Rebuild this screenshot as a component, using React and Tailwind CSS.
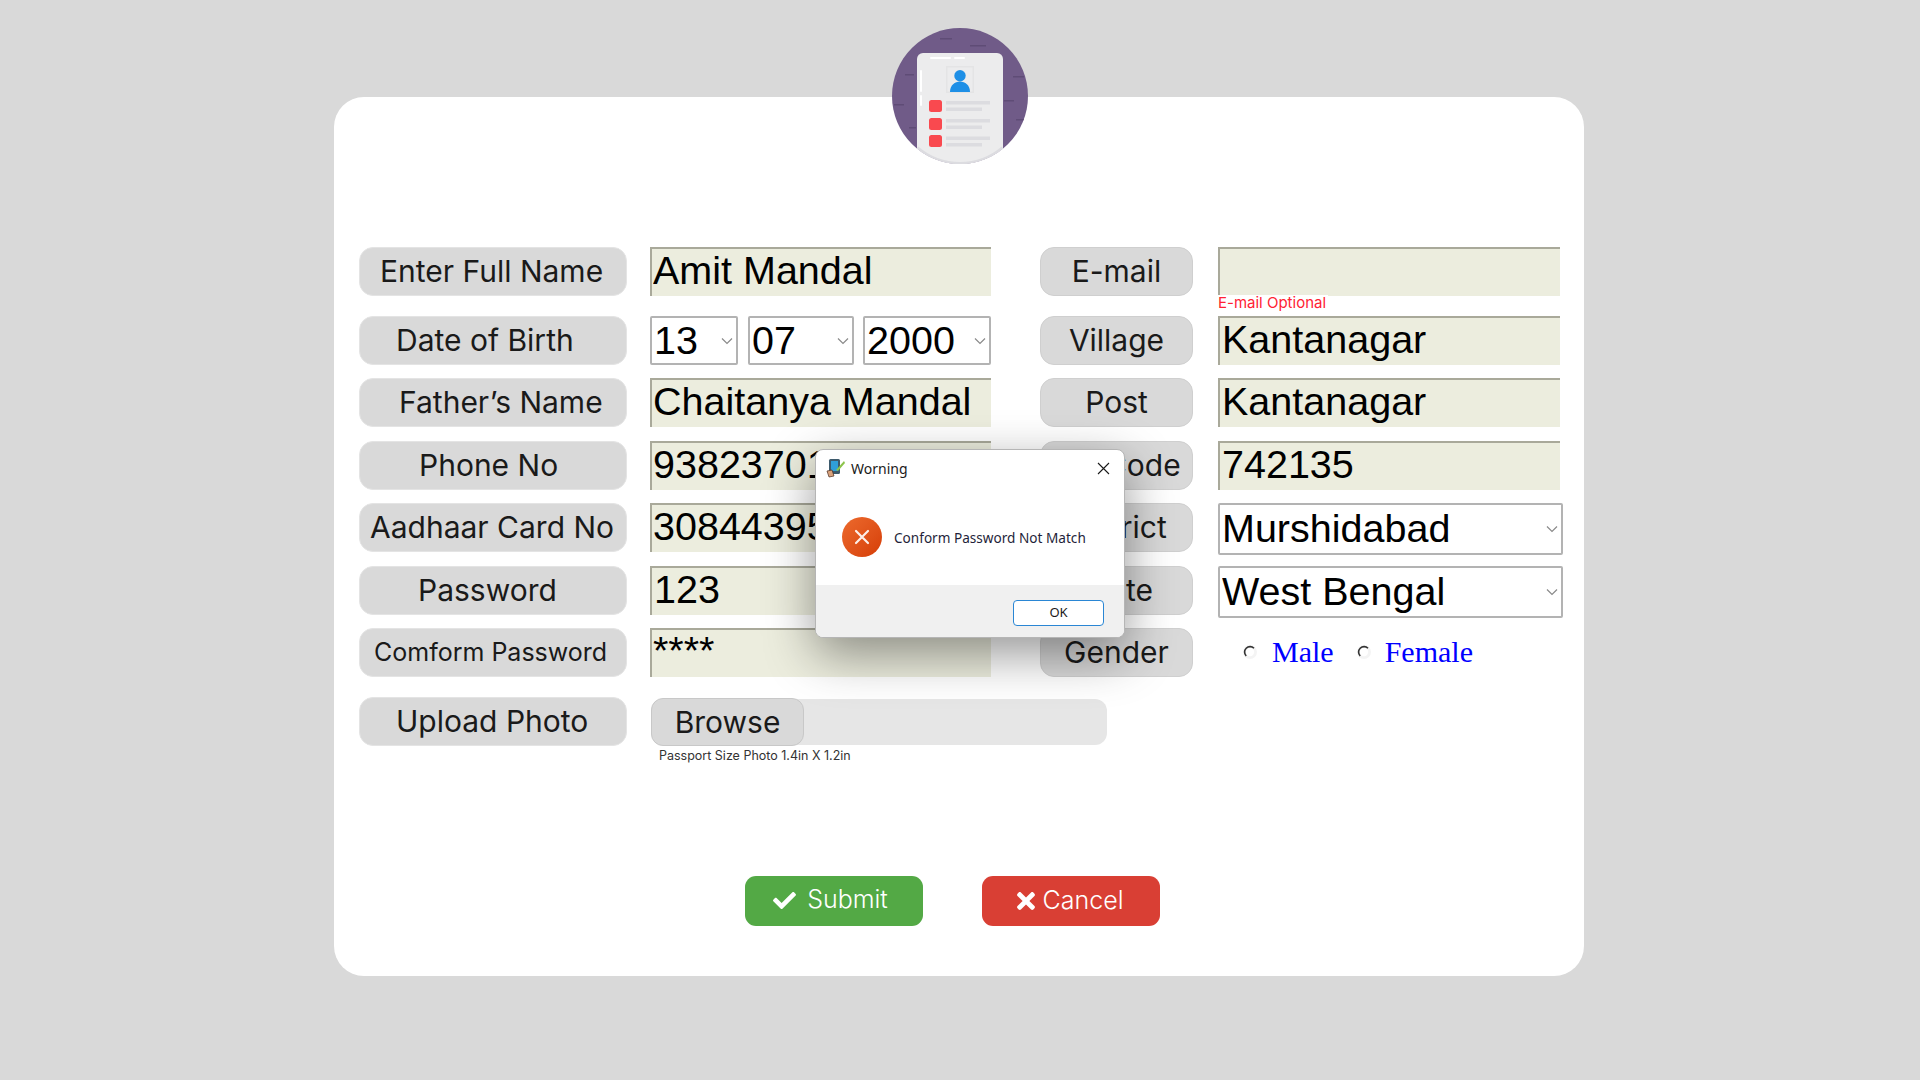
import React from "react";
import { FaCheck, FaTimes } from "react-icons/fa";

const inter = "font-['Inter',sans-serif]";
const arial = "font-['Liberation_Sans',Arial,sans-serif]";

function Label({ children, pad, size = "text-[30px]" }) {
  return (
    <div className={`w-[268px] h-[49px] shrink-0 rounded-[14px] bg-[#d9d9d9] border border-[#e4e4e4] flex items-center whitespace-nowrap text-[#1a1a1a] ${inter} ${size} ${pad}`}>
      {children}
    </div>
  );
}

function SideLabel({ children }) {
  return (
    <div className={`w-[153px] h-[49px] shrink-0 ml-[49px] rounded-[14px] bg-[#d9d9d9] border border-[#cfcfcf] flex items-center justify-center text-[30px] text-[#1a1a1a] ${inter}`}>
      {children}
    </div>
  );
}

function Field({ value, width = "w-[341px]", pad = "pl-[1px]" }) {
  return (
    <input
      readOnly
      value={value}
      className={`${width} h-[49px] shrink-0 bg-[#ecedde] border-t-2 border-l-2 border-[#a9a99a] pb-[3px] text-[39.5px] text-black outline-none ${arial} ${pad}`}
    />
  );
}

function Chevron() {
  return (
    <svg className="absolute right-[5px] top-1/2 -translate-y-1/2 pointer-events-none" width="12" height="8" viewBox="0 0 12 8" fill="none">
      <path d="M1 1.5 L6 6.5 L11 1.5" stroke="#8a8a8a" strokeWidth="1.2" />
    </svg>
  );
}

function Select({ value, width, height = "h-[49px]", pad = "pl-[2px]", cls = "" }) {
  return (
    <div className={`relative shrink-0 ${width} ${height} ${cls}`}>
      <select
        value={value}
        onChange={() => {}}
        className={`appearance-none w-full h-full bg-white border-2 border-[#b3b3b3] rounded-[2px] pb-[3px] text-[39.5px] leading-[44px] text-black outline-none ${arial} ${pad}`}
      >
        <option>{value}</option>
      </select>
      <Chevron />
    </div>
  );
}

function Radio() {
  return (
    <svg width="16" height="16" viewBox="0 0 16 16" fill="none" className="shrink-0">
      <circle cx="8" cy="8" r="7" fill="#f4f4f4" />
      <circle cx="8" cy="8" r="4.2" fill="#ffffff" />
      <path d="M12 4.2 A5.4 5.4 0 1 0 4.2 12" stroke="#333333" strokeWidth="1.6" />
    </svg>
  );
}

function Avatar() {
  return (
    <svg className="absolute left-[558px] -top-[69px]" width="136" height="136" viewBox="0 0 136 136">
      <defs>
        <clipPath id="avatarClip">
          <circle cx="68" cy="68" r="68" />
        </clipPath>
      </defs>
      <g clipPath="url(#avatarClip)">
        <rect width="136" height="136" fill="#705b88" />
        <g fill="#5f4c76">
          <rect x="48" y="10" width="12" height="1.5" />
          <rect x="78" y="17" width="16" height="1.5" />
          <rect x="13" y="46" width="9" height="1.5" />
          <rect x="121" y="48" width="11" height="1.5" />
          <rect x="2" y="76" width="10" height="1.5" />
          <rect x="112" y="72" width="10" height="1.5" />
          <rect x="17" y="99" width="7" height="1.5" />
          <rect x="124" y="91" width="8" height="1.5" />
        </g>
        <rect x="25" y="25" width="86" height="120" rx="6" fill="#ececed" />
        <rect x="38" y="29" width="21" height="2" rx="1" fill="#ffffff" />
        <rect x="62" y="29" width="11" height="2" rx="1" fill="#ffffff" />
        <rect x="28" y="42" width="2" height="22" rx="1" fill="#ffffff" />
        <rect x="28" y="67" width="2" height="11" rx="1" fill="#ffffff" />
        <rect x="54" y="38" width="28" height="27" fill="#e4e4e5" />
        <rect x="55.5" y="39.5" width="25" height="24" fill="#ececed" />
        <circle cx="68" cy="47.7" r="5.7" fill="#1e8fe6" />
        <path d="M58 64 C58 50 78 50 78 64 Z" fill="#1e8fe6" />
        <g fill="#f9494f">
          <rect x="37" y="72" width="13" height="12" rx="2.5" />
          <rect x="37" y="90" width="13" height="12" rx="2.5" />
          <rect x="37" y="107" width="13" height="12" rx="2.5" />
        </g>
        <g fill="#dcdce0">
          <rect x="54" y="73" width="44" height="3.5" />
          <rect x="54" y="79.5" width="36" height="3.5" />
          <rect x="54" y="91" width="44" height="3.5" />
          <rect x="54" y="97.5" width="36" height="3.5" />
          <rect x="54" y="108.5" width="44" height="3.5" />
          <rect x="54" y="115" width="36" height="3.5" />
        </g>
        <path d="M25 120 A66 66 0 0 0 111 120" stroke="#dcdce0" strokeWidth="4" fill="none" />
      </g>
    </svg>
  );
}

function Dialog() {
  return (
    <div className="absolute left-[815px] top-[449px] w-[310px] h-[189px] bg-white rounded-[8px] border border-[#b5b5b5] shadow-[0_16px_50px_rgba(0,0,0,0.42)] flex flex-col overflow-hidden font-['Noto_Sans',sans-serif]">
      <div className="h-[38px] flex items-center pl-[10px] pr-[14px] pb-[2px] shrink-0">
        <svg width="20" height="20" viewBox="0 0 20 20" className="shrink-0">
          <rect x="3" y="1" width="11" height="15" rx="1.5" fill="#3d5a6c" />
          <rect x="5" y="3" width="7" height="10" fill="#2f9fd8" />
          <path d="M10 12 L18 3 L19 5 L12 13 Z" fill="#8bc34a" />
          <path d="M1 13 L6 12 L8 18 L3 19 Z" fill="#d8a27c" stroke="#4a2c20" strokeWidth="0.7" />
        </svg>
        <span className="ml-[5px] text-[14px] text-[#1a1a1a]">Worning</span>
        <svg className="ml-auto" width="13" height="13" viewBox="0 0 13 13">
          <path d="M1 1 L12 12 M12 1 L1 12" stroke="#1a1a1a" strokeWidth="1.1" />
        </svg>
      </div>
      <div className="flex-1 flex items-center pl-[26px]">
        <div className="w-[40px] h-[40px] rounded-full bg-gradient-to-br from-[#ec6a2c] to-[#d63d04] flex items-center justify-center shrink-0">
          <svg width="16" height="16" viewBox="0 0 16 16">
            <path d="M2 2 L14 14 M14 2 L2 14" stroke="#ffffff" strokeWidth="2.2" strokeLinecap="round" opacity="0.9" />
          </svg>
        </div>
        <span className="ml-[12px] pt-[3px] text-[13.6px] text-[#1f1f3a] whitespace-nowrap">Conform Password Not Match</span>
      </div>
      <div className="h-[52px] bg-[#f0f0f0] flex items-center justify-end pr-[20px] pt-[4px] shrink-0">
        <button className="w-[91px] h-[26px] bg-white border-[1.5px] border-[#2a86d4] rounded-[4px] text-[13px] text-[#1a1a1a]">OK</button>
      </div>
    </div>
  );
}

export default function App() {
  return (
    <div className="relative w-[1920px] h-[1080px] overflow-hidden bg-[#d9d9d9] pt-[97px] pl-[334px]">
      <div className="relative w-[1250px] h-[879px] bg-white rounded-[30px] pl-[25px] pt-[150px]">
        <Avatar />
        <div className="flex flex-col">
          <div className="flex items-start">
            <Label pad="pl-[20px]">Enter Full Name</Label>
            <div className="ml-[23px]"><Field value="Amit Mandal" /></div>
            <SideLabel>E-mail</SideLabel>
            <div className="relative ml-[25px]">
              <Field value="" width="w-[342px]" />
              <span className={`absolute left-0 top-[48px] bg-white pr-[2px] text-[15px] leading-[16px] text-[#ff2233] whitespace-nowrap ${inter}`}>E-mail Optional</span>
            </div>
          </div>

          <div className="flex items-start mt-[20px]">
            <Label pad="pl-[36px]">Date of Birth</Label>
            <div className="ml-[23px] w-[341px] flex">
              <Select value="13" width="w-[88px]" />
              <Select value="07" width="w-[106px]" cls="ml-[10px]" />
              <Select value="2000" width="w-[128px]" cls="ml-[9px]" />
            </div>
            <SideLabel>Village</SideLabel>
            <div className="ml-[25px]"><Field value="Kantanagar" width="w-[342px]" pad="pl-[2px]" /></div>
          </div>

          <div className="flex items-start mt-[13px]">
            <Label pad="pl-[39px]">Father’s Name</Label>
            <div className="ml-[23px]"><Field value="Chaitanya Mandal" /></div>
            <SideLabel>Post</SideLabel>
            <div className="ml-[25px]"><Field value="Kantanagar" width="w-[342px]" pad="pl-[2px]" /></div>
          </div>

          <div className="flex items-start mt-[14px]">
            <Label pad="pl-[59px]">Phone No</Label>
            <div className="ml-[23px]"><Field value="9382370123" /></div>
            <SideLabel>Pin Code</SideLabel>
            <div className="ml-[25px]"><Field value="742135" width="w-[342px]" pad="pl-[2px]" /></div>
          </div>

          <div className="flex items-start mt-[13px]">
            <Label pad="pl-[10px]">Aadhaar Card No</Label>
            <div className="ml-[23px]"><Field value="308443951234" /></div>
            <SideLabel>District</SideLabel>
            <div className="ml-[25px]"><Select value="Murshidabad" width="w-[345px]" height="h-[52px] -mb-[3px]" /></div>
          </div>

          <div className="flex items-start mt-[14px]">
            <Label pad="pl-[58px]">Password</Label>
            <div className="ml-[23px]"><Field value="123" pad="pl-[2px]" /></div>
            <SideLabel>State</SideLabel>
            <div className="ml-[25px]"><Select value="West Bengal" width="w-[345px]" height="h-[52px] -mb-[3px]" /></div>
          </div>

          <div className="flex items-start mt-[13px]">
            <Label pad="pl-[14px]" size="text-[25px]">Comform Password</Label>
            <div className={`ml-[23px] w-[341px] h-[49px] bg-[#ecedde] border-t-2 border-l-2 border-[#a9a99a] pl-[1px] text-[39.5px] leading-[40px] text-black ${arial}`}>****</div>
            <SideLabel>Gender</SideLabel>
            <div className="ml-[25px] w-[342px] h-[49px] flex items-center pl-[24px] pb-[2px] font-['Liberation_Serif',serif] text-[30px] text-[#0000ff]">
              <Radio />
              <span className="ml-[14px]">Male</span>
              <span className="ml-[22px]"><Radio /></span>
              <span className="ml-[13px]">Female</span>
            </div>
          </div>

          <div className="flex items-start mt-[20px]">
            <Label pad="pl-[36px]">Upload Photo</Label>
            <div className="relative ml-[24px] w-[456px] h-[46px] mt-[2px] bg-[#e6e6e6] rounded-[12px]">
              <button className={`absolute left-0 -top-[1px] w-[153px] h-[48px] bg-[#d9d9d9] border border-[#c8c8c8] rounded-[12px] text-[30px] text-[#1a1a1a] ${inter}`}>Browse</button>
              <span className={`absolute left-[8px] top-[49px] text-[12.5px] leading-[16px] text-[#333333] whitespace-nowrap ${inter}`}>Passport Size Photo 1.4in X 1.2in</span>
            </div>
          </div>

          <div className="flex mt-[130px] ml-[386px] gap-[59px]">
            <button className={`w-[178px] h-[50px] bg-[#53a945] rounded-[11px] text-white text-[25px] font-light flex items-center justify-center gap-[11px] pb-[2px] pr-[7px] ${inter}`}>
              <FaCheck className="w-[23px] h-[23px]" />
              <span>Submit</span>
            </button>
            <button className={`w-[178px] h-[50px] bg-[#d93f34] rounded-[11px] text-white text-[25px] font-light flex items-center justify-center gap-[4px] pr-[6px] ${inter}`}>
              <FaTimes className="w-[26px] h-[26px]" />
              <span>Cancel</span>
            </button>
          </div>
        </div>
      </div>
      <Dialog />
    </div>
  );
}
